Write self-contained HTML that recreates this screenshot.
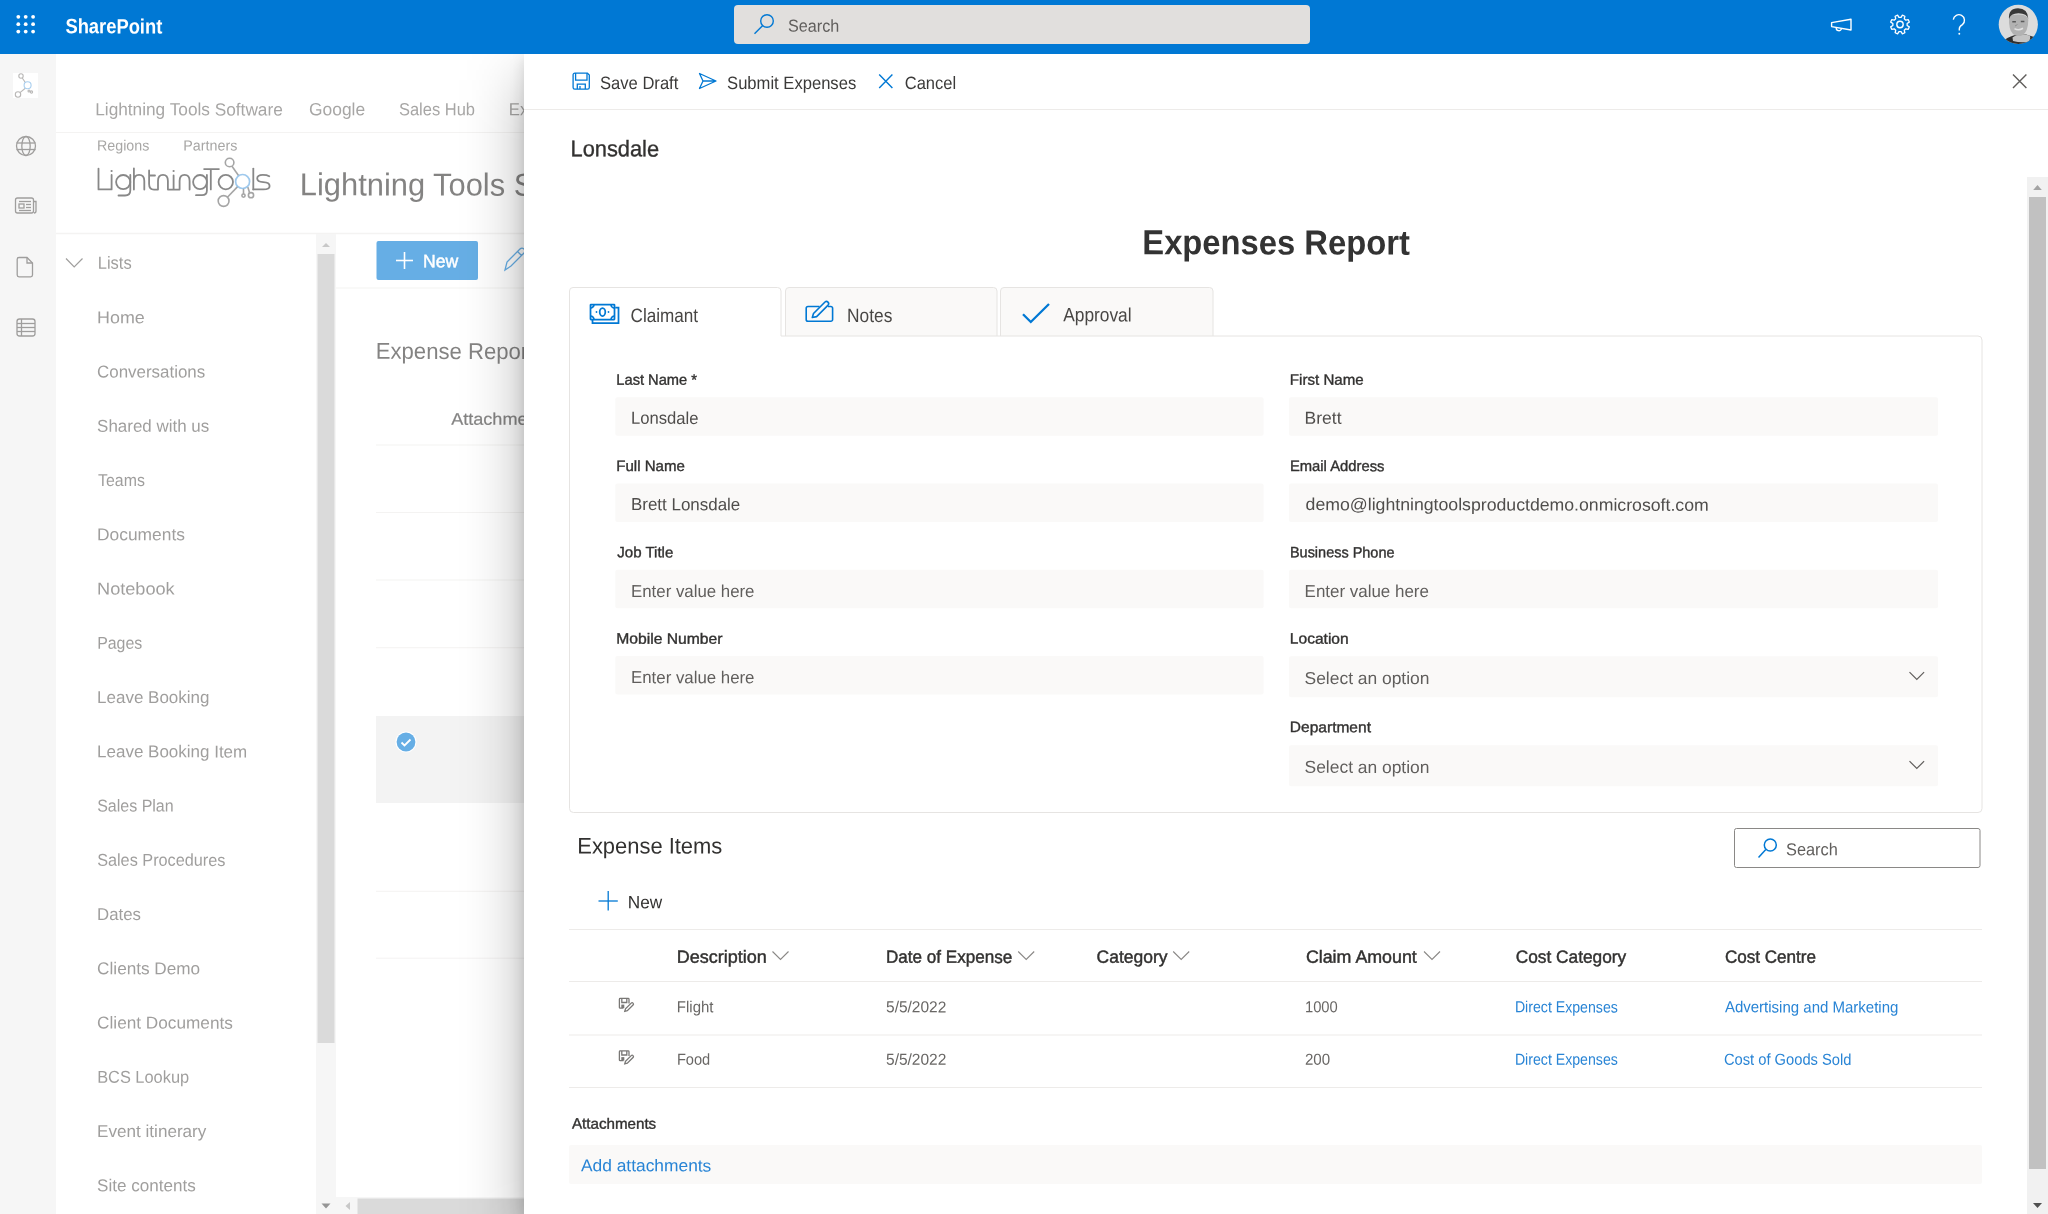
<!DOCTYPE html>
<html><head><meta charset="utf-8"><title>SharePoint - Expenses Report</title>
<style>html,body{margin:0;padding:0;background:#fff;overflow:hidden} svg{display:block;will-change:transform} text{font-family:"Liberation Sans",sans-serif}</style>
</head><body>
<svg width="2048" height="1214" viewBox="0 0 2048 1214" font-family="Liberation Sans">
<defs>
<filter id="blur1" x="-50%" y="-10%" width="200%" height="120%"><feGaussianBlur stdDeviation="30"/></filter>
<filter id="blur2" x="-50%" y="-10%" width="200%" height="120%"><feGaussianBlur stdDeviation="7"/></filter>
<clipPath id="clipBg"><rect x="0" y="54" width="524" height="1160"/></clipPath>
</defs>
<rect width="2048" height="1214" fill="#ffffff"/>
<g clip-path="url(#clipBg)">

<rect x="0" y="54" width="56" height="1160" fill="#f1f1f1"/>
<rect x="13" y="73" width="25" height="25" fill="#ffffff"/>
<g fill="none" stroke="#8a8886" stroke-width="1.1"><circle cx="21" cy="76" r="2.2"/><circle cx="18" cy="94.5" r="2.7"/><line x1="22.3" y1="78" x2="25.3" y2="82.5"/><line x1="25.3" y1="88.3" x2="20" y2="92.6"/><circle cx="29" cy="91" r="1"/><circle cx="31.5" cy="92" r="1.1"/></g><circle cx="27.6" cy="85.3" r="3.5" fill="none" stroke="#71afe5" stroke-width="1.1"/>
<g fill="none" stroke="#605e5c" stroke-width="1.3"><circle cx="26" cy="146" r="9.5"/><ellipse cx="26" cy="146" rx="4.2" ry="9.5"/><line x1="16.5" y1="143" x2="35.5" y2="143"/><line x1="16.5" y1="149.5" x2="35.5" y2="149.5"/><rect x="15.5" y="198" width="18" height="15" rx="2"/><path d="M33.5 201.5 h2.5 v9.5 a2 2 0 0 1 -2 2"/><rect x="19" y="204" width="5" height="4"/><line x1="26" y1="204.5" x2="31" y2="204.5"/><line x1="26" y1="207.5" x2="31" y2="207.5"/><line x1="19" y1="210.5" x2="31" y2="210.5"/><line x1="19" y1="201.5" x2="31" y2="201.5"/><path d="M19 257.5 h8 l5.5 5.5 v12 a1.8 1.8 0 0 1 -1.8 1.8 h-11.7 a1.8 1.8 0 0 1 -1.8 -1.8 v-15.7 a1.8 1.8 0 0 1 1.8 -1.8z"/><path d="M27 257.5 v5.5 h5.5"/><rect x="17" y="319" width="18" height="17" rx="2.5"/><line x1="17" y1="323.5" x2="35" y2="323.5"/><line x1="17" y1="327.5" x2="35" y2="327.5"/><line x1="17" y1="331.5" x2="35" y2="331.5"/><line x1="21.5" y1="319" x2="21.5" y2="336"/></g>
<line x1="56" y1="132.5" x2="524" y2="132.5" stroke="#edebe9" stroke-width="1"/>
<line x1="56" y1="233.5" x2="524" y2="233.5" stroke="#edebe9" stroke-width="1.5"/>
<g fill="none" stroke="#3a3a3a" stroke-width="1.8" stroke-linecap="round" stroke-linejoin="round"><path d="M98.5 168.6 V189.4 H111.6 V174.9"/><circle cx="123.2" cy="182.1" r="7.1"/><path d="M130.3 174.9 V190.5 Q130.3 195.5 125 195.5 H118.5"/><path d="M133.9 168.3 V189.6 M133.9 181 Q133.9 174.9 139.1 174.9 Q144.3 174.9 144.3 181 V189.6"/><path d="M149.1 170.4 V184 Q149.1 189.6 154 189.6 H158 V181 Q158 174.9 163 174.9 Q167.9 174.9 167.9 181 V189.6 H179.6 V181 Q179.6 174.9 184.6 174.9 Q189.6 174.9 189.6 181 V189.6 M149.1 175.5 H155 M173.6 175.5 V189.6"/><ellipse cx="200" cy="182.1" rx="6.9" ry="7.1"/><path d="M206.9 175 V190.5 Q206.9 195.2 202 195.2 H196"/><path d="M204.1 169.1 H218.9 M210.8 169.1 V189.4"/><circle cx="225.8" cy="182.1" r="7.2"/><path d="M253.3 168.6 V189.4"/><path d="M269.2 176.2 Q267 174.9 262.8 174.9 Q257.2 174.9 257.2 178.5 Q257.2 181.8 263.2 182.1 Q269.6 182.4 269.6 185.9 Q269.6 189.4 263.4 189.4 H253.3"/></g><circle cx="111.6" cy="171" r="1.1" fill="#3a3a3a"/><circle cx="173.6" cy="171" r="1.1" fill="#3a3a3a"/><g fill="none" stroke="#6a6a6a" stroke-width="1.6"><circle cx="229.6" cy="162.5" r="4.3"/><circle cx="223.6" cy="201" r="5.4"/><line x1="232" y1="166.2" x2="238.5" y2="175.5"/><line x1="227.4" y1="197.2" x2="237.6" y2="186.6"/><circle cx="243.5" cy="195.6" r="1.6"/><circle cx="251" cy="195.2" r="2.6"/><line x1="243.5" y1="188.5" x2="243.5" y2="194"/><line x1="247.8" y1="187" x2="249.6" y2="192.8"/></g><circle cx="242.6" cy="181.5" r="7" fill="none" stroke="#2b88d8" stroke-opacity="0.75" stroke-width="1.7"/>
<path d="M66 258.5 L74.2 266.8 L82.5 258.5" fill="none" stroke="#605e5c" stroke-width="1.2"/>
<rect x="316" y="234" width="20" height="980" fill="#f1f1f1"/>
<rect x="317.5" y="254" width="17" height="789" fill="#c1c1c1"/>
<path d="M322 247 L326 243 L330 247 Z" fill="#a3a3a3"/>
<path d="M321.5 1203.5 L330.5 1203.5 L326 1208.5 Z" fill="#505050"/>
<rect x="376.5" y="241" width="101.5" height="39" rx="2" fill="#0078d4"/>
<g stroke="#ffffff" stroke-width="1.6"><line x1="396" y1="260.5" x2="413" y2="260.5"/><line x1="404.5" y1="252" x2="404.5" y2="269"/></g>
<line x1="336" y1="288" x2="524" y2="288" stroke="#edebe9" stroke-width="1"/>
<path d="M505 270 L507 262 L520 249 a2.8 2.8 0 0 1 4 4 L511 266 Z M517.5 251.5 l4 4" fill="none" stroke="#0078d4" stroke-width="1.3"/>
<line x1="376" y1="445" x2="524" y2="445" stroke="#edebe9" stroke-width="1"/>
<line x1="376" y1="512.5" x2="524" y2="512.5" stroke="#edebe9" stroke-width="1"/>
<line x1="376" y1="580" x2="524" y2="580" stroke="#edebe9" stroke-width="1"/>
<line x1="376" y1="647.7" x2="524" y2="647.7" stroke="#edebe9" stroke-width="1"/>
<line x1="376" y1="891.3" x2="524" y2="891.3" stroke="#edebe9" stroke-width="1"/>
<line x1="376" y1="958.2" x2="524" y2="958.2" stroke="#edebe9" stroke-width="1"/>
<rect x="376" y="716" width="148" height="87" fill="#ebebeb"/>
<circle cx="406" cy="742" r="10.6" fill="#ffffff"/><circle cx="406" cy="742" r="9.4" fill="#0078d4"/><path d="M401.5 742.5 l3 3 l6 -6" fill="none" stroke="#fff" stroke-width="1.8"/>
<rect x="336" y="1197" width="188" height="17" fill="#f1f1f1"/>
<rect x="357.5" y="1198.5" width="170" height="15.5" fill="#c1c1c1"/>
<path d="M350 1202 L345.5 1206 L350 1210 Z" fill="#a3a3a3"/>
<text transform="rotate(0.1 95.22 115.20)" x="95.22" y="115.20" font-size="17.6" font-weight="400" fill="#6d6b69" textLength="187.55" lengthAdjust="spacingAndGlyphs">Lightning Tools Software</text>
<text transform="rotate(0.1 309.01 115.20)" x="309.01" y="115.20" font-size="17.6" font-weight="400" fill="#6d6b69" textLength="56.12" lengthAdjust="spacingAndGlyphs">Google</text>
<text transform="rotate(0.1 398.96 115.20)" x="398.96" y="115.20" font-size="17.6" font-weight="400" fill="#6d6b69" textLength="76.01" lengthAdjust="spacingAndGlyphs">Sales Hub</text>
<text transform="rotate(0.1 508.85 115.20)" x="508.85" y="115.20" font-size="17.6" font-weight="400" fill="#6d6b69" textLength="65.05" lengthAdjust="spacingAndGlyphs">Expense</text>
<text transform="rotate(0.1 97.03 150.40)" x="97.03" y="150.40" font-size="14.7" font-weight="400" fill="#6d6b69" textLength="52.26" lengthAdjust="spacingAndGlyphs">Regions</text>
<text transform="rotate(0.1 183.33 150.40)" x="183.33" y="150.40" font-size="14.7" font-weight="400" fill="#6d6b69" textLength="53.97" lengthAdjust="spacingAndGlyphs">Partners</text>
<text transform="rotate(0.1 299.86 195.30)" x="299.86" y="195.30" font-size="31.8" font-weight="400" fill="#323130" textLength="266.93" lengthAdjust="spacingAndGlyphs">Lightning Tools Site</text>
<text transform="rotate(0.1 97.76 268.70)" x="97.76" y="268.70" font-size="17.6" font-weight="400" fill="#605e5c" textLength="33.91" lengthAdjust="spacingAndGlyphs">Lists</text>
<text transform="rotate(0.1 97.06 323.20)" x="97.06" y="323.20" font-size="17.15" font-weight="400" fill="#605e5c" textLength="47.71" lengthAdjust="spacingAndGlyphs">Home</text>
<text transform="rotate(0.1 97.11 377.45)" x="97.11" y="377.45" font-size="17.15" font-weight="400" fill="#605e5c" textLength="108.06" lengthAdjust="spacingAndGlyphs">Conversations</text>
<text transform="rotate(0.1 97.11 431.70)" x="97.11" y="431.70" font-size="17.15" font-weight="400" fill="#605e5c" textLength="112.07" lengthAdjust="spacingAndGlyphs">Shared with us</text>
<text transform="rotate(0.1 98.10 485.95)" x="98.10" y="485.95" font-size="17.15" font-weight="400" fill="#605e5c" textLength="46.75" lengthAdjust="spacingAndGlyphs">Teams</text>
<text transform="rotate(0.1 97.09 540.20)" x="97.09" y="540.20" font-size="17.15" font-weight="400" fill="#605e5c" textLength="87.83" lengthAdjust="spacingAndGlyphs">Documents</text>
<text transform="rotate(0.1 97.04 594.45)" x="97.04" y="594.45" font-size="17.15" font-weight="400" fill="#605e5c" textLength="77.66" lengthAdjust="spacingAndGlyphs">Notebook</text>
<text transform="rotate(0.1 97.17 648.70)" x="97.17" y="648.70" font-size="17.15" font-weight="400" fill="#605e5c" textLength="45.09" lengthAdjust="spacingAndGlyphs">Pages</text>
<text transform="rotate(0.1 97.11 702.95)" x="97.11" y="702.95" font-size="17.15" font-weight="400" fill="#605e5c" textLength="112.28" lengthAdjust="spacingAndGlyphs">Leave Booking</text>
<text transform="rotate(0.1 97.11 757.20)" x="97.11" y="757.20" font-size="17.15" font-weight="400" fill="#605e5c" textLength="150.10" lengthAdjust="spacingAndGlyphs">Leave Booking Item</text>
<text transform="rotate(0.1 97.17 811.45)" x="97.17" y="811.45" font-size="17.15" font-weight="400" fill="#605e5c" textLength="76.52" lengthAdjust="spacingAndGlyphs">Sales Plan</text>
<text transform="rotate(0.1 97.15 865.70)" x="97.15" y="865.70" font-size="17.15" font-weight="400" fill="#605e5c" textLength="128.23" lengthAdjust="spacingAndGlyphs">Sales Procedures</text>
<text transform="rotate(0.1 97.12 919.95)" x="97.12" y="919.95" font-size="17.15" font-weight="400" fill="#605e5c" textLength="43.84" lengthAdjust="spacingAndGlyphs">Dates</text>
<text transform="rotate(0.1 97.10 974.20)" x="97.10" y="974.20" font-size="17.15" font-weight="400" fill="#605e5c" textLength="103.09" lengthAdjust="spacingAndGlyphs">Clients Demo</text>
<text transform="rotate(0.1 97.10 1028.45)" x="97.10" y="1028.45" font-size="17.15" font-weight="400" fill="#605e5c" textLength="135.79" lengthAdjust="spacingAndGlyphs">Client Documents</text>
<text transform="rotate(0.1 97.14 1082.70)" x="97.14" y="1082.70" font-size="17.15" font-weight="400" fill="#605e5c" textLength="91.99" lengthAdjust="spacingAndGlyphs">BCS Lookup</text>
<text transform="rotate(0.1 97.10 1136.95)" x="97.10" y="1136.95" font-size="17.15" font-weight="400" fill="#605e5c" textLength="109.26" lengthAdjust="spacingAndGlyphs">Event itinerary</text>
<text transform="rotate(0.1 97.11 1191.20)" x="97.11" y="1191.20" font-size="17.15" font-weight="400" fill="#605e5c" textLength="98.60" lengthAdjust="spacingAndGlyphs">Site contents</text>
<text transform="rotate(0.1 423.02 267.20)" x="423.02" y="267.20" font-size="18" font-weight="400" fill="#ffffff" stroke="#ffffff" stroke-width="0.450" textLength="35.19" lengthAdjust="spacingAndGlyphs">New</text>
<text transform="rotate(0.1 375.76 358.80)" x="375.76" y="358.80" font-size="22.8" font-weight="400" fill="#323130" textLength="169.63" lengthAdjust="spacingAndGlyphs">Expense Reports</text>
<text transform="rotate(0.1 451.20 424.70)" x="451.20" y="424.70" font-size="16.9" font-weight="400" fill="#323130" stroke="#323130" stroke-width="0.220" textLength="100.46" lengthAdjust="spacingAndGlyphs">Attachments</text>
</g>
<rect x="0" y="54" width="2048" height="1160" fill="#ffffff" fill-opacity="0.4"/>
<rect x="524" y="80" width="1524" height="1160" fill="#000" fill-opacity="0.3" filter="url(#blur1)"/>
<rect x="524" y="59" width="1524" height="1160" fill="#000" fill-opacity="0.14" filter="url(#blur2)"/>
<rect x="524" y="54" width="1524" height="1160" fill="#ffffff"/>
<g fill="none" stroke="#0078d4" stroke-width="1.3"><path d="M574.8 73.1 h12.6 l1.9 1.9 v12.4 a1.7 1.7 0 0 1 -1.7 1.7 h-12.8 a1.7 1.7 0 0 1 -1.7 -1.7 v-12.6 a1.7 1.7 0 0 1 1.7 -1.7z"/><path d="M575.6 73.1 v7 h11.4 v-7"/><path d="M577.3 89.1 v-4.9 h8 v4.9"/><line x1="580" y1="86" x2="580" y2="89"/></g>
<path d="M699.5 73.5 L716 81 L699.5 88.5 L703 81 Z M703 81 H716" fill="none" stroke="#0078d4" stroke-width="1.3" stroke-linejoin="round"/>
<path d="M879.2 74.5 L892.4 88.1 M892.4 74.5 L879.2 88.1" stroke="#0078d4" stroke-width="1.4"/>
<path d="M2013 74.5 L2026.4 88.1 M2026.4 74.5 L2013 88.1" stroke="#605e5c" stroke-width="1.4"/>
<line x1="524" y1="109.5" x2="2048" y2="109.5" stroke="#edebe9" stroke-width="1"/>
<rect x="2027" y="177" width="21" height="1037" fill="#f1f1f1"/>
<rect x="2029" y="197" width="17" height="972" fill="#c1c1c1"/>
<path d="M2033.2 190 L2037.5 185 L2041.8 190 Z" fill="#a3a3a3"/>
<path d="M2033 1203 L2042 1203 L2037.5 1208 Z" fill="#505050"/>
<path d="M785.5 336 V291 a3.5 3.5 0 0 1 3.5 -3.5 H993.5 a3.5 3.5 0 0 1 3.5 3.5 V336" fill="#faf9f8" stroke="#e6e4e2" stroke-width="1"/>
<path d="M1000.5 336 V291 a3.5 3.5 0 0 1 3.5 -3.5 H1209.5 a3.5 3.5 0 0 1 3.5 3.5 V336" fill="#faf9f8" stroke="#e6e4e2" stroke-width="1"/>
<path d="M569.5 291 a3.5 3.5 0 0 1 3.5 -3.5 H777.5 a3.5 3.5 0 0 1 3.5 3.5 V336 H1978 a4 4 0 0 1 4 4 V808.5 a4 4 0 0 1 -4 4 H573.5 a4 4 0 0 1 -4 -4 Z" fill="#ffffff" stroke="#e6e4e2" stroke-width="1"/>
<g fill="none" stroke="#0078d4" stroke-width="1.75"><rect x="590.5" y="304.5" width="24" height="15" rx="0.5"/><path d="M615.2 307.5 h3.3 v15.5 h-26 v-3"/><ellipse cx="602.5" cy="312" rx="2.8" ry="4"/><path d="M590.5 308 a3.5 3.5 0 0 0 3.5 -3.5 M611 304.5 a3.5 3.5 0 0 0 3.5 3.5 M614.5 316 a3.5 3.5 0 0 0 -3.5 3.5 M594 319.5 a3.5 3.5 0 0 0 -3.5 -3.5"/></g><circle cx="596.5" cy="312" r="0.9" fill="#0078d4"/><circle cx="608.5" cy="312" r="0.9" fill="#0078d4"/>
<g fill="none" stroke="#0078d4" stroke-width="1.6" stroke-linejoin="round"><path d="M819.5 306.5 H808 a1.8 1.8 0 0 0 -1.8 1.8 V319.5 a1.8 1.8 0 0 0 1.8 1.8 H830.8 a1.8 1.8 0 0 0 1.8 -1.8 V308.3 a1.8 1.8 0 0 0 -1.8 -1.8 H828"/><path d="M812.3 317.5 L813.5 313.5 L825 302 a2.2 2.2 0 0 1 3.1 3.1 L816.6 316.6 Z"/></g>
<path d="M1023 314.2 L1030.8 322 L1049 304" fill="none" stroke="#0078d4" stroke-width="2.3"/>
<rect x="615.3" y="397.30" width="648.3" height="38.5" rx="2" fill="#faf9f8"/>
<rect x="615.3" y="483.55" width="648.3" height="38.5" rx="2" fill="#faf9f8"/>
<rect x="615.3" y="569.80" width="648.3" height="38.5" rx="2" fill="#faf9f8"/>
<rect x="615.3" y="656.05" width="648.3" height="38.5" rx="2" fill="#faf9f8"/>
<rect x="1289" y="397.30" width="649" height="38.5" rx="2" fill="#faf9f8"/>
<rect x="1289" y="483.55" width="649" height="38.5" rx="2" fill="#faf9f8"/>
<rect x="1289" y="569.80" width="649" height="38.5" rx="2" fill="#faf9f8"/>
<rect x="1289" y="656.2" width="649" height="41" rx="2" fill="#faf9f8"/>
<path d="M1909.5 672.2 L1916.8 679.5 L1924.1 672.2" fill="none" stroke="#605e5c" stroke-width="1.2"/>
<rect x="1289" y="745.2" width="649" height="41" rx="2" fill="#faf9f8"/>
<path d="M1909.5 761.2 L1916.8 768.5 L1924.1 761.2" fill="none" stroke="#605e5c" stroke-width="1.2"/>
<rect x="1734.5" y="828.5" width="245.5" height="39" rx="2" fill="#fff" stroke="#8a8886" stroke-width="1"/>
<g fill="none" stroke="#0078d4" stroke-width="1.5"><circle cx="1770.3" cy="845" r="6"/><line x1="1765.8" y1="849.6" x2="1758.5" y2="857.6"/></g>
<g stroke="#0078d4" stroke-width="1.3"><line x1="598.5" y1="901" x2="617.8" y2="901"/><line x1="608.2" y1="891" x2="608.2" y2="910.5"/></g>
<line x1="569" y1="929.5" x2="1982" y2="929.5" stroke="#edebe9" stroke-width="1"/>
<line x1="569" y1="981.5" x2="1982" y2="981.5" stroke="#edebe9" stroke-width="1"/>
<line x1="569" y1="1035" x2="1982" y2="1035" stroke="#edebe9" stroke-width="1"/>
<line x1="569" y1="1087.5" x2="1982" y2="1087.5" stroke="#edebe9" stroke-width="1"/>
<path d="M772.5 951.5 L780.5 959.5 L788.5 951.5" fill="none" stroke="#8a8886" stroke-width="1.1"/>
<path d="M1018.2 951.5 L1026.2 959.5 L1034.2 951.5" fill="none" stroke="#8a8886" stroke-width="1.1"/>
<path d="M1173.2 951.5 L1181.2 959.5 L1189.2 951.5" fill="none" stroke="#8a8886" stroke-width="1.1"/>
<path d="M1424 951.5 L1432 959.5 L1440 951.5" fill="none" stroke="#8a8886" stroke-width="1.1"/>
<g fill="none" stroke="#797775" stroke-width="1.3"><path d="M629 1003.5 V999.2 a0.8 0.8 0 0 0 -0.8 -0.8 H620.2 a0.8 0.8 0 0 0 -0.8 0.8 V1007.4 a0.8 0.8 0 0 0 0.8 0.8 H623.5"/><path d="M621.8 998.5 v4 h5 v-4"/><path d="M624.8 1011.3 L625.5 1008.8 L631.2 1003.1 a1.3 1.3 0 0 1 1.85 1.85 L627.3 1010.6 Z"/></g><rect x="621.3" y="1004.6" width="3" height="3.4" fill="#797775"/>
<g fill="none" stroke="#797775" stroke-width="1.3"><path d="M629 1056.0 V1051.7 a0.8 0.8 0 0 0 -0.8 -0.8 H620.2 a0.8 0.8 0 0 0 -0.8 0.8 V1059.9 a0.8 0.8 0 0 0 0.8 0.8 H623.5"/><path d="M621.8 1051.0 v4 h5 v-4"/><path d="M624.8 1063.8 L625.5 1061.3 L631.2 1055.6 a1.3 1.3 0 0 1 1.85 1.85 L627.3 1063.1 Z"/></g><rect x="621.3" y="1057.1" width="3" height="3.4" fill="#797775"/>
<rect x="569" y="1145" width="1413" height="39" rx="2" fill="#faf9f8"/>
<text transform="rotate(0.1 600.07 88.90)" x="600.07" y="88.90" font-size="17.9" font-weight="400" fill="#3b3a39" textLength="78.24" lengthAdjust="spacingAndGlyphs">Save Draft</text>
<text transform="rotate(0.1 727.07 88.90)" x="727.07" y="88.90" font-size="17.9" font-weight="400" fill="#3b3a39" textLength="129.14" lengthAdjust="spacingAndGlyphs">Submit Expenses</text>
<text transform="rotate(0.1 904.78 88.90)" x="904.78" y="88.90" font-size="17.9" font-weight="400" fill="#3b3a39" textLength="51.37" lengthAdjust="spacingAndGlyphs">Cancel</text>
<text transform="rotate(0.1 570.53 156.25)" x="570.53" y="156.25" font-size="22.5" font-weight="400" fill="#323130" stroke="#323130" stroke-width="0.350" textLength="88.60" lengthAdjust="spacingAndGlyphs">Lonsdale</text>
<text transform="rotate(0.1 1142.32 254.20)" x="1142.32" y="254.20" font-size="34.9" font-weight="700" fill="#333333" textLength="267.52" lengthAdjust="spacingAndGlyphs">Expenses Report</text>
<text transform="rotate(0.1 630.61 321.90)" x="630.61" y="321.90" font-size="19.3" font-weight="400" fill="#484644" textLength="67.47" lengthAdjust="spacingAndGlyphs">Claimant</text>
<text transform="rotate(0.1 847.10 321.90)" x="847.10" y="321.90" font-size="19.3" font-weight="400" fill="#484644" textLength="45.23" lengthAdjust="spacingAndGlyphs">Notes</text>
<text transform="rotate(0.1 1063.20 321.30)" x="1063.20" y="321.30" font-size="19.3" font-weight="400" fill="#484644" textLength="68.40" lengthAdjust="spacingAndGlyphs">Approval</text>
<text transform="rotate(0.1 616.32 384.70)" x="616.32" y="384.70" font-size="15" font-weight="400" fill="#323130" stroke="#323130" stroke-width="0.375" textLength="80.73" lengthAdjust="spacingAndGlyphs">Last Name *</text>
<text transform="rotate(0.1 1289.89 384.70)" x="1289.89" y="384.70" font-size="15" font-weight="400" fill="#323130" stroke="#323130" stroke-width="0.375" textLength="73.75" lengthAdjust="spacingAndGlyphs">First Name</text>
<text transform="rotate(0.1 616.30 471.00)" x="616.30" y="471.00" font-size="15" font-weight="400" fill="#323130" stroke="#323130" stroke-width="0.375" textLength="68.56" lengthAdjust="spacingAndGlyphs">Full Name</text>
<text transform="rotate(0.1 1289.91 471.00)" x="1289.91" y="471.00" font-size="15" font-weight="400" fill="#323130" stroke="#323130" stroke-width="0.375" textLength="94.56" lengthAdjust="spacingAndGlyphs">Email Address</text>
<text transform="rotate(0.1 617.30 557.30)" x="617.30" y="557.30" font-size="15" font-weight="400" fill="#323130" stroke="#323130" stroke-width="0.375" textLength="55.97" lengthAdjust="spacingAndGlyphs">Job Title</text>
<text transform="rotate(0.1 1289.94 557.30)" x="1289.94" y="557.30" font-size="15" font-weight="400" fill="#323130" stroke="#323130" stroke-width="0.375" textLength="104.56" lengthAdjust="spacingAndGlyphs">Business Phone</text>
<text transform="rotate(0.1 616.26 643.60)" x="616.26" y="643.60" font-size="15" font-weight="400" fill="#323130" stroke="#323130" stroke-width="0.375" textLength="106.25" lengthAdjust="spacingAndGlyphs">Mobile Number</text>
<text transform="rotate(0.1 1289.86 643.60)" x="1289.86" y="643.60" font-size="15" font-weight="400" fill="#323130" stroke="#323130" stroke-width="0.375" textLength="58.78" lengthAdjust="spacingAndGlyphs">Location</text>
<text transform="rotate(0.1 1289.87 732.10)" x="1289.87" y="732.10" font-size="15" font-weight="400" fill="#323130" stroke="#323130" stroke-width="0.375" textLength="81.09" lengthAdjust="spacingAndGlyphs">Department</text>
<text transform="rotate(0.1 631.04 423.80)" x="631.04" y="423.80" font-size="17.3" font-weight="400" fill="#4f4d4b" textLength="67.41" lengthAdjust="spacingAndGlyphs">Lonsdale</text>
<text transform="rotate(0.1 1304.59 423.80)" x="1304.59" y="423.80" font-size="17.3" font-weight="400" fill="#4f4d4b" textLength="36.91" lengthAdjust="spacingAndGlyphs">Brett</text>
<text transform="rotate(0.1 631.02 510.10)" x="631.02" y="510.10" font-size="17.3" font-weight="400" fill="#4f4d4b" textLength="109.22" lengthAdjust="spacingAndGlyphs">Brett Lonsdale</text>
<text transform="rotate(0.1 1305.60 510.10)" x="1305.60" y="510.10" font-size="17.3" font-weight="400" fill="#4f4d4b" textLength="403.12" lengthAdjust="spacingAndGlyphs">demo@lightningtoolsproductdemo.onmicrosoft.com</text>
<text transform="rotate(0.1 631.03 596.90)" x="631.03" y="596.90" font-size="17.3" font-weight="400" fill="#605e5c" textLength="123.46" lengthAdjust="spacingAndGlyphs">Enter value here</text>
<text transform="rotate(0.1 1304.62 596.90)" x="1304.62" y="596.90" font-size="17.3" font-weight="400" fill="#605e5c" textLength="124.28" lengthAdjust="spacingAndGlyphs">Enter value here</text>
<text transform="rotate(0.1 631.03 683.10)" x="631.03" y="683.10" font-size="17.3" font-weight="400" fill="#605e5c" textLength="123.46" lengthAdjust="spacingAndGlyphs">Enter value here</text>
<text transform="rotate(0.1 1304.59 683.90)" x="1304.59" y="683.90" font-size="17.3" font-weight="400" fill="#605e5c" textLength="124.87" lengthAdjust="spacingAndGlyphs">Select an option</text>
<text transform="rotate(0.1 1304.59 772.80)" x="1304.59" y="772.80" font-size="17.3" font-weight="400" fill="#605e5c" textLength="124.87" lengthAdjust="spacingAndGlyphs">Select an option</text>
<text transform="rotate(0.1 577.25 853.40)" x="577.25" y="853.40" font-size="22.5" font-weight="400" fill="#323130" textLength="145.06" lengthAdjust="spacingAndGlyphs">Expense Items</text>
<text transform="rotate(0.1 1786.06 855.20)" x="1786.06" y="855.20" font-size="17.3" font-weight="400" fill="#605e5c" textLength="51.67" lengthAdjust="spacingAndGlyphs">Search</text>
<text transform="rotate(0.1 627.74 908.30)" x="627.74" y="908.30" font-size="17.9" font-weight="400" fill="#323130" textLength="34.36" lengthAdjust="spacingAndGlyphs">New</text>
<text transform="rotate(0.1 676.78 962.70)" x="676.78" y="962.70" font-size="17.7" font-weight="400" fill="#323130" stroke="#323130" stroke-width="0.443" textLength="90.01" lengthAdjust="spacingAndGlyphs">Description</text>
<text transform="rotate(0.1 886.04 962.70)" x="886.04" y="962.70" font-size="17.7" font-weight="400" fill="#323130" stroke="#323130" stroke-width="0.443" textLength="126.15" lengthAdjust="spacingAndGlyphs">Date of Expense</text>
<text transform="rotate(0.1 1096.60 962.70)" x="1096.60" y="962.70" font-size="17.7" font-weight="400" fill="#323130" stroke="#323130" stroke-width="0.443" textLength="70.88" lengthAdjust="spacingAndGlyphs">Category</text>
<text transform="rotate(0.1 1305.90 962.70)" x="1305.90" y="962.70" font-size="17.7" font-weight="400" fill="#323130" stroke="#323130" stroke-width="0.443" textLength="110.90" lengthAdjust="spacingAndGlyphs">Claim Amount</text>
<text transform="rotate(0.1 1515.80 962.70)" x="1515.80" y="962.70" font-size="17.7" font-weight="400" fill="#323130" stroke="#323130" stroke-width="0.443" textLength="110.36" lengthAdjust="spacingAndGlyphs">Cost Category</text>
<text transform="rotate(0.1 1724.90 962.70)" x="1724.90" y="962.70" font-size="17.7" font-weight="400" fill="#323130" stroke="#323130" stroke-width="0.443" textLength="91.06" lengthAdjust="spacingAndGlyphs">Cost Centre</text>
<text transform="rotate(0.1 676.86 1012.30)" x="676.86" y="1012.30" font-size="15.9" font-weight="400" fill="#696765" textLength="36.61" lengthAdjust="spacingAndGlyphs">Flight</text>
<text transform="rotate(0.1 886.02 1012.30)" x="886.02" y="1012.30" font-size="15.9" font-weight="400" fill="#696765" textLength="60.31" lengthAdjust="spacingAndGlyphs">5/5/2022</text>
<text transform="rotate(0.1 1304.97 1012.30)" x="1304.97" y="1012.30" font-size="15.9" font-weight="400" fill="#696765" textLength="32.76" lengthAdjust="spacingAndGlyphs">1000</text>
<text transform="rotate(0.1 1514.91 1012.30)" x="1514.91" y="1012.30" font-size="15.9" font-weight="400" fill="#2884d5" textLength="102.91" lengthAdjust="spacingAndGlyphs">Direct Expenses</text>
<text transform="rotate(0.1 1724.90 1012.30)" x="1724.90" y="1012.30" font-size="15.9" font-weight="400" fill="#2884d5" textLength="173.49" lengthAdjust="spacingAndGlyphs">Advertising and Marketing</text>
<text transform="rotate(0.1 676.88 1064.70)" x="676.88" y="1064.70" font-size="15.9" font-weight="400" fill="#696765" textLength="33.34" lengthAdjust="spacingAndGlyphs">Food</text>
<text transform="rotate(0.1 886.02 1064.70)" x="886.02" y="1064.70" font-size="15.9" font-weight="400" fill="#696765" textLength="60.31" lengthAdjust="spacingAndGlyphs">5/5/2022</text>
<text transform="rotate(0.1 1304.95 1064.70)" x="1304.95" y="1064.70" font-size="15.9" font-weight="400" fill="#696765" textLength="25.14" lengthAdjust="spacingAndGlyphs">200</text>
<text transform="rotate(0.1 1514.91 1064.70)" x="1514.91" y="1064.70" font-size="15.9" font-weight="400" fill="#2884d5" textLength="102.91" lengthAdjust="spacingAndGlyphs">Direct Expenses</text>
<text transform="rotate(0.1 1723.98 1064.70)" x="1723.98" y="1064.70" font-size="15.9" font-weight="400" fill="#2884d5" textLength="127.46" lengthAdjust="spacingAndGlyphs">Cost of Goods Sold</text>
<text transform="rotate(0.1 572.00 1128.60)" x="572.00" y="1128.60" font-size="15" font-weight="400" fill="#323130" stroke="#323130" stroke-width="0.375" textLength="84.18" lengthAdjust="spacingAndGlyphs">Attachments</text>
<text transform="rotate(0.1 581.00 1171.20)" x="581.00" y="1171.20" font-size="17" font-weight="400" fill="#2884d5" textLength="130.29" lengthAdjust="spacingAndGlyphs">Add attachments</text>
<rect x="0" y="0" width="2048" height="54" fill="#0078d4"/>
<g fill="#fff"><circle cx="18.3" cy="16.8" r="1.9"/><circle cx="25.7" cy="16.8" r="1.9"/><circle cx="33.1" cy="16.8" r="1.9"/><circle cx="18.3" cy="24.2" r="1.9"/><circle cx="25.7" cy="24.2" r="1.9"/><circle cx="33.1" cy="24.2" r="1.9"/><circle cx="18.3" cy="31.6" r="1.9"/><circle cx="25.7" cy="31.6" r="1.9"/><circle cx="33.1" cy="31.6" r="1.9"/></g>
<rect x="734" y="5" width="576" height="39" rx="4" fill="#e1dfdd"/>
<g fill="none" stroke="#0078d4" stroke-width="1.4"><circle cx="767" cy="21" r="6.3"/><line x1="762.5" y1="25.7" x2="754.5" y2="33.8"/></g>
<g fill="none" stroke="#fff" stroke-width="1.4" stroke-linejoin="round"><path d="M1831.6 22.6 L1851 19.2 V30 L1831.6 26.6 Z"/><path d="M1836.3 27.6 a2.6 2.6 0 0 0 5.2 0.9"/></g>
<path d="M1907.12 25.56 L1909.29 26.90 L1908.27 29.37 L1905.79 28.78 L1904.28 30.29 L1904.87 32.77 L1902.40 33.79 L1901.06 31.62 L1898.94 31.62 L1897.60 33.79 L1895.13 32.77 L1895.72 30.29 L1894.21 28.78 L1891.73 29.37 L1890.71 26.90 L1892.88 25.56 L1892.88 23.44 L1890.71 22.10 L1891.73 19.63 L1894.21 20.22 L1895.72 18.71 L1895.13 16.23 L1897.60 15.21 L1898.94 17.38 L1901.06 17.38 L1902.40 15.21 L1904.87 16.23 L1904.28 18.71 L1905.79 20.22 L1908.27 19.63 L1909.29 22.10 L1907.12 23.44 Z" fill="none" stroke="#fff" stroke-width="1.3" stroke-linejoin="round"/>
<circle cx="1900" cy="24.5" r="3.2" fill="none" stroke="#fff" stroke-width="1.4"/>
<path d="M1953.3 19.6 A5.6 5.6 0 1 1 1962.4 24.6 C1960.5 25.8 1959.3 26.8 1959.3 29 V30.6" fill="none" stroke="#fff" stroke-width="1.4"/><circle cx="1959.3" cy="33.7" r="0.95" fill="#fff"/>
<clipPath id="av"><circle cx="2018.3" cy="24.4" r="19.6"/></clipPath>
<g clip-path="url(#av)"><rect x="1998" y="4" width="41" height="41" fill="#dcdcdc"/><path d="M2003 46 L2005 39.5 Q2011 35.5 2016 35 L2026 34.5 Q2032 36 2037 38 L2040 46 Z" fill="#2e2e2e"/><path d="M2012.5 37.5 Q2018 33 2030 35.5 Q2031 39 2028 42 Q2020 43 2013 41 Z" fill="#c4c4c4"/><path d="M2009 17 Q2008.5 30 2013 34 Q2017 37 2022 35.5 Q2028.3 32 2028.3 20 Q2028 14.5 2018.5 14.5 Q2009.5 14.5 2009 17 Z" fill="#b2b2b2"/><path d="M2009 19 Q2008.2 8.2 2018 8.2 Q2027.8 8.2 2028.4 19 Q2027 13.5 2018.5 13.3 Q2010.5 13.5 2009 19 Z" fill="#393939"/><path d="M2012.3 21.8 h3.6 M2020.8 21.5 h3.6" stroke="#5a5a5a" stroke-width="1.5"/><path d="M2014.5 28.6 Q2018.5 31 2023 28.3" stroke="#e2e2e2" stroke-width="1.6" fill="none"/><path d="M2015 26 L2017.5 24.5" stroke="#888" stroke-width="0.8"/></g>
<text transform="rotate(0.1 65.42 33.30)" x="65.42" y="33.30" font-size="20.8" font-weight="700" fill="#ffffff" textLength="96.90" lengthAdjust="spacingAndGlyphs">SharePoint</text>
<text transform="rotate(0.1 788.06 31.60)" x="788.06" y="31.60" font-size="17.15" font-weight="400" fill="#605e5c" textLength="51.18" lengthAdjust="spacingAndGlyphs">Search</text>
</svg></body></html>
